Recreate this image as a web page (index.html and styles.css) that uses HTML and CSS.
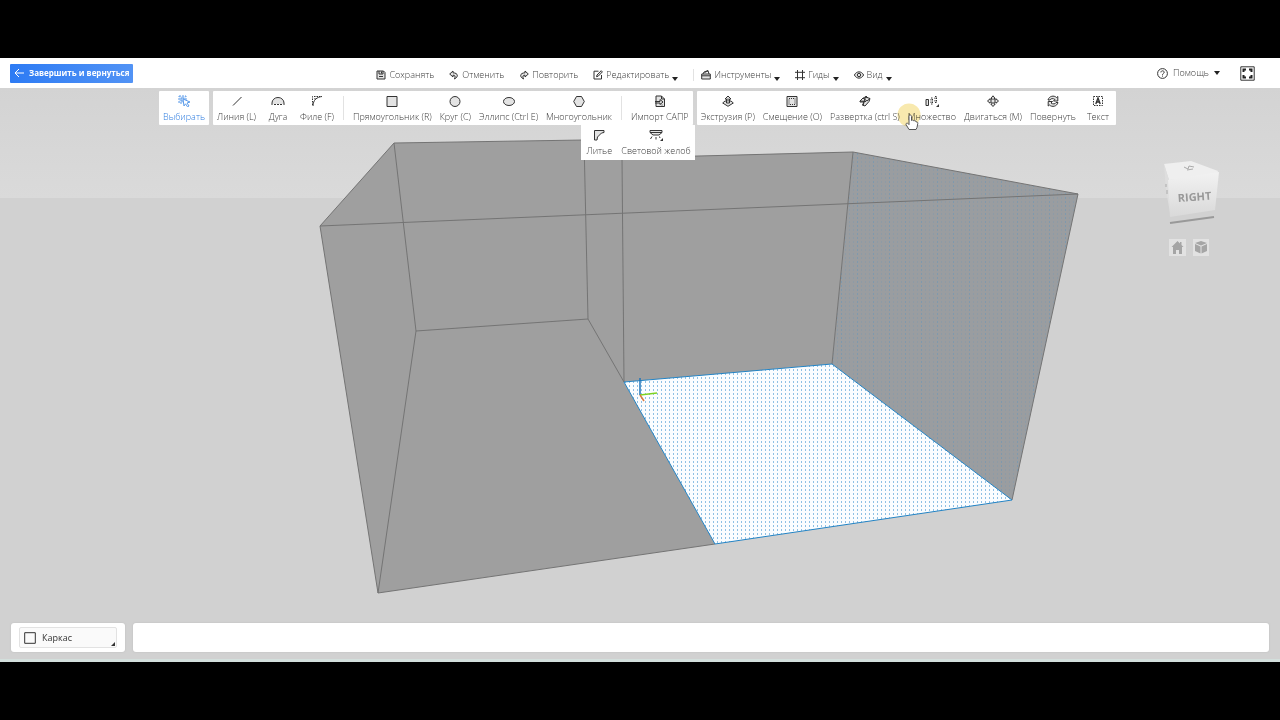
FILE: index.html
```html
<!DOCTYPE html>
<html lang="ru">
<head>
<meta charset="utf-8">
<meta name="viewport" content="width=device-width, initial-scale=1">
<title>Каркас</title>
<link rel="stylesheet" href="styles.css">
</head>
<body>
<div class="app">
  <header class="topbar">
    <div class="topbar-start">
      <button class="finish"><svg width="10" height="10" viewBox="0 0 10 10"><path d="M10 5H1M5 1L1 5l4 4"/></svg>Завершить и вернуться</button>
    </div>
    <nav class="menu">
      <button class="menu-item"><svg class="icon" width="10" height="10" viewBox="0 0 10 10"><path class="soft" d="M1 1h6.500L9 2.500V9H1z"/><path d="M3 1v3h4V1M3 6.500h4M5.500 1.500v2"/></svg>Сохранять</button>
      <button class="menu-item"><svg class="icon" width="10" height="10" viewBox="0 0 10 10"><path class="soft" d="M4 1L.7 4 4 7V5.200c2 0 2.700.8 1.500 3.800C9.500 7 9.500 3 4 2.800z"/></svg>Отменить</button>
      <button class="menu-item"><svg class="icon" width="10" height="10" viewBox="0 0 10 10"><path class="soft" d="M6 1l3.300 3L6 7V5.200C4 5.200 3.300 6 4.500 9 .5 7 .5 3 6 2.800z"/></svg>Повторить</button>
      <button class="menu-item"><svg class="icon" width="10" height="10" viewBox="0 0 10 10"><path d="M5.500 1.200H1V9h7.500V5"/><path class="soft" d="M3.500 6.700L4 5l4.200-4.300 1.200 1.200L5.200 6.200z"/></svg>Редактировать<i class="caret"></i></button>
      <span class="divider"></span>
      <button class="menu-item"><svg class="icon" width="10" height="10" viewBox="0 0 10 10"><path class="soft" d="M.7 4h8.600v5H.7z"/><path d="M2 4l1-2 4-1.500 1 3.500M3.500 2.500L7 1M.7 5.800h8.600"/></svg>Инструменты<i class="caret"></i></button>
      <button class="menu-item"><svg class="icon" width="10" height="10" viewBox="0 0 10 10"><path d="M2.500 0v10M7.500 0v10M0 2.300h10M0 7.700h10"/></svg>Гиды<i class="caret"></i></button>
      <button class="menu-item"><svg class="icon" width="10" height="10" viewBox="0 0 10 10"><path class="soft" d="M.4 5C2.500.8 7.500.8 9.600 5 7.500 9.200 2.500 9.200.4 5z"/><circle cx="5" cy="5" r="1.700"/></svg>Вид<i class="caret"></i></button>
    </nav>
    <div class="topbar-end">
      <button class="menu-item help"><svg class="icon" width="11" height="11" viewBox="0 0 11 11"><circle cx="5.500" cy="5.500" r="4.900"/><path d="M3.900 4.400c0-2.200 3.300-2 3.300-.1 0 1.200-1.700 1.100-1.700 2.500M5.500 7.600v1"/></svg>Помощь<i class="caret"></i></button>
      <button class="fullscreen" aria-label="Во весь экран"><svg width="15" height="15" viewBox="0 0 15 15"><path class="frame" d="M.8.800h13.400v13.400H.8z"/><path class="corners" d="M3.500 6V3.500H6M9 3.500h2.500V6M11.500 9v2.500H9M6 11.500H3.500V9"/></svg></button>
    </div>
  </header>

  <main class="workspace">
    <svg class="scene" viewBox="0 88 1280 574" preserveAspectRatio="xMidYMid slice">
      <defs>
        <linearGradient id="sky" x1="0" y1="0" x2="0" y2="1"><stop offset="0" stop-color="#d3d3d3"/><stop offset="1" stop-color="#dadada"/></linearGradient>
        <pattern id="dots" width="4" height="4" patternUnits="userSpaceOnUse"><rect width="4" height="4" fill="#fbfdff"/><rect x="1" y="1" width="1" height="2" fill="#8fc0e4"/></pattern>
        <pattern id="wall-dots" width="16" height="4" patternUnits="userSpaceOnUse"><rect width="16" height="4" fill="#9a9da0"/><path fill="#8e9ba6" d="M1 1h1v2H1zM5 1h1v2H5zM13 1h1v2h-1z"/><path fill="#7f99ad" d="M9 1h1v2H9z"/></pattern>
        <linearGradient id="cube" x1="0" y1="0" x2="0" y2="1"><stop offset="0" stop-color="#f2f2f2"/><stop offset="1" stop-color="#d9d9d9"/></linearGradient>
      </defs>
      <rect y="88" width="1280" height="574" fill="#d1d1d1"/>
      <rect y="88" width="1280" height="110" fill="url(#sky)"/>
      <path fill="#9f9f9f" d="M320 226L394 143 584 140 622 158 853 152 848 204 832 364 624 382 715 544 378 593z"/>
      <path fill="url(#wall-dots)" d="M853 152L1078 194 1012 500 832 364z"/>
      <path fill="url(#dots)" d="M624 382L832 364 1012 500 715 544z"/>
      <g class="edges">
        <path d="M378 593L320 226 394 143 584 140 588 319 416 331 394 143M416 331L378 593 715 544M588 319L624 382 622 158 853 152 1078 194 1012 500M320 226L1078 194M853 152L832 364"/>
      </g>
      <path class="selected" d="M624 382L832 364 1012 500 715 544z"/>
      <g stroke-width="1.500"><path d="M640 378V395" stroke="#1e73b8"/><path d="M640 395L657 393" stroke="#7ed321"/><path d="M640 395L644 401" stroke="#d9783d"/></g>
      <g class="view-cube">
        <path fill="#efefef" d="M1164 164l27-3 27 10-2 6-47 3z"/>
        <path fill="#dedede" d="M1164 164l5 16 1 33-4-23z"/>
        <path fill="url(#cube)" d="M1168 180l51-8-4 38-45 7z"/>
        <path d="M1170 223l44-6" stroke="#999" stroke-width="2"/>
        <path d="M1166 184v3M1167 190v4M1184 167l4 2 1-3 5 1M1187 170l6-1" stroke="#aaa"/>
        <text x="1178" y="202" transform="rotate(-4 1178 202)">RIGHT</text>
      </g>
      <g class="view-buttons">
        <path fill="#e2e2e2" d="M1169 239h17v17h-17zM1193 239h16v17h-16z"/>
        <path fill="#a5a5a5" d="M1177.500 241l-6 6h1.500v7h3v-4h3v4h3v-7h1.500l-2-2v-3h-1.500v1.500z"/>
        <path fill="#a5a5a5" d="M1201 241l6 2-6 2.500-6-2.500zM1195 244l5.500 2.500v7L1195 251zM1207 244l-5.500 2.500v7L1207 251z"/>
      </g>
    </svg>

    <div class="toolbar">
      <div class="group">
        <button class="tool active"><svg class="icon" width="14" height="12" viewBox="0 0 14 12"><path class="soft" d="M2 1h7v7H2z" stroke-dasharray="2 1"/><path d="M4 3h3v3H4z"/><path fill="#fff" d="M6 4l7 3-3 1 2 3-1.500.8-2-3L7 11z"/></svg>Выбирать</button>
      </div>
      <div class="group">
        <button class="tool"><svg class="icon" width="12" height="12" viewBox="0 0 12 12"><path d="M2 10.500L10.500 2"/></svg>Линия (L)</button>
        <button class="tool"><svg class="icon" width="14" height="12" viewBox="0 0 14 12"><path class="soft" stroke="none" d="M1 9a6 6 0 0 1 12 0z"/><path d="M1 10V8a6 5.500 0 0 1 12 0v2"/><path d="M3 9.500h8" stroke-dasharray="2 1"/></svg>Дуга</button>
        <button class="tool"><svg class="icon" width="12" height="12" viewBox="0 0 12 12"><path d="M2 11C2 5 6 2 11 1.500"/><path d="M1.500 10V1.500H9M4 3v2" stroke-dasharray="1.500 1"/></svg>Филе (F)</button>
        <span class="divider"></span>
        <button class="tool"><svg class="icon" width="12" height="12" viewBox="0 0 12 12"><path class="soft" d="M1 1.500h10v10H1z"/></svg>Прямоугольник (R)</button>
        <button class="tool"><svg class="icon" width="12" height="12" viewBox="0 0 12 12"><circle class="soft" cx="6" cy="6.500" r="5"/></svg>Круг (C)</button>
        <button class="tool"><svg class="icon" width="12" height="12" viewBox="0 0 12 12"><ellipse class="soft" cx="6" cy="6.500" rx="5.500" ry="4"/></svg>Эллипс (Ctrl E)</button>
        <button class="tool"><svg class="icon" width="12" height="12" viewBox="0 0 12 12"><path class="soft" d="M3.500 1.500h5l2.800 5-2.800 5h-5L.7 6.500z"/></svg>Многоугольник</button>
        <span class="divider"></span>
        <button class="tool"><svg class="icon" width="12" height="12" viewBox="0 0 12 12"><path class="soft" d="M2 1h5.500L10.500 4v7.500H2z"/><path d="M7.500 1v3h3M1 6.500h5V4.500L9 7 6 9.500V8H1M8 9.500v1"/></svg>Импорт САПР</button>
        <div class="submenu">
          <button class="tool"><svg class="icon" width="12" height="12" viewBox="0 0 12 12"><path class="soft" d="M1.500 1.500h9.500v2L8.500 4 4.500 8l-.5 3H1.500z"/></svg>Литье</button>
          <button class="tool"><svg class="icon" width="14" height="12" viewBox="0 0 14 12"><path class="soft" d="M1 1.500h12v2L10 6H4L1 3.500z"/><path d="M1 3.500h12M3 7.500L1.500 10M7 8v2.500M10.500 7.500l.5 1.500"/><path class="corner" d="M14 9v3h-3z"/></svg>Световой желоб</button>
        </div>
      </div>
      <div class="group">
        <button class="tool"><svg class="icon" width="12" height="12" viewBox="0 0 12 12"><path class="soft" d="M.7 8L3 6h6l2.300 2L6 11.300z"/><path class="soft" d="M4.500 8V4H3l3-3 3 3H7.500v4z"/><path d="M6 3.500v3"/></svg>Экструзия (P)</button>
        <button class="tool"><svg class="icon" width="12" height="12" viewBox="0 0 12 12"><path class="soft" d="M1 1.500h10v10H1z"/><path d="M3 3.500h6v6H3z" stroke-dasharray="1 1"/></svg>Смещение (O)</button>
        <button class="tool"><svg class="icon" width="12" height="12" viewBox="0 0 12 12"><path class="soft" d="M1 6l3-3 4-.5 3 1-1 3-4 4.500-2.500-1L5 7H1z"/><path d="M6.500 1L4 11M4 3l4 3 3-2.500M1 6l6 .5M7 1l2 2"/></svg>Развертка (ctrl S)</button>
        <button class="tool"><svg class="icon" width="14" height="12" viewBox="0 0 14 12"><path class="soft" d="M1 4.500h2.500v6H1z"/><path d="M6 3h1.500v6H6zM10 1.500h1.500v6H10z" stroke-dasharray="1.500 1"/><path class="corner" d="M14 9v3h-3z"/></svg>Множество</button>
        <button class="tool"><svg class="icon" width="12" height="12" viewBox="0 0 12 12"><path class="soft" d="M6 .8l2.200 2.700H7V5h2V3.800L11.500 6 9 8.200V7H7v2h1.200L6 11.500 3.800 9H5V7H3v1.200L.5 6 3 3.800V5h2V3.500H3.800z"/></svg>Двигаться (M)</button>
        <button class="tool"><svg class="icon" width="12" height="12" viewBox="0 0 12 12"><path class="soft" d="M1 5C2 1 7 0 9.500 2.500l1.300-1V6H6.500L8 4.500C6 3 3.500 3.500 3 5zM11 7.500c-1 4-6 5-8.500 2.500l-1.300 1V6.500h4.300L4 8c2 1.500 4.500 1 5-.5z"/></svg>Повернуть</button>
        <button class="tool"><svg class="icon" width="12" height="12" viewBox="0 0 12 12"><path d="M1.500 1.500h9v9h-9z" stroke-dasharray="1.500 1"/><path d="M3.800 9L6 3l2.200 6M4.500 7h3" stroke-width="1.400"/></svg>Текст</button>
      </div>
    </div>

    <svg class="halo" width="24" height="24" viewBox="0 0 24 24"><circle cx="12" cy="12" r="11.500" fill="#f8e9ae"/></svg>
    <svg class="pointer" width="14" height="17" viewBox="0 0 14 17"><path fill="#fff" stroke="#555" d="M4 15.500l-3-5c0-2 2-1.500 3 0V2.500c0-2 2.500-2 2.500 0v4c1-1 2.300-.5 2.300.5 1-.8 2.200-.2 2.200 1 1.200-.4 2 .4 1.800 1.500l-.8 4-1 2z"/></svg>

    <footer class="bottom">
      <div class="mode-card">
        <button class="mode"><svg width="12" height="12" viewBox="0 0 12 12"><path d="M.7.700h10.600v10.600H.7z"/></svg>Каркас</button>
      </div>
      <div class="status"></div>
    </footer>
  </main>
</div>
</body>
</html>
```
FILE: styles.css
```css
* { box-sizing: border-box; }
body {
  margin: 0;
  background: #000;
  color: #3c3c3c;
  font: 300 9px/12px "Open Sans", "Noto Sans", sans-serif;
}
button {
  margin: 0;
  padding: 0;
  border: 0;
  background: none;
  color: inherit;
  font: inherit;
  white-space: nowrap;
}
svg { flex: none; fill: none; }
.app {
  display: flex;
  flex-direction: column;
  min-height: 100vh;
  padding: 58px 0;
}
.topbar {
  display: grid;
  grid-template-columns: 1fr auto 1fr;
  align-items: center;
  height: 30px;
  padding: 0 25px 0 10px;
  background: #fff;
}
.finish {
  display: flex;
  align-items: center;
  gap: 5px;
  height: 19px;
  padding: 0 4px;
  border-radius: 1px;
  background: linear-gradient(90deg, #2d7bf4, #5293f5);
  color: #fff;
  font-size: 8px;
  font-weight: 700;
}
.finish svg { stroke: #fff; }
.menu {
  display: flex;
  align-items: center;
  gap: 15px;
  padding: 4px 0 0 3px;
}
.menu-item {
  display: flex;
  align-items: center;
  gap: 3px;
}
.icon { stroke: #333; stroke-width: 1; }
.icon .soft { fill: #e3e3e3; }
.icon .corner { fill: #333; stroke: none; }
.caret {
  align-self: flex-end;
  border: 3px solid transparent;
  border-top: 4px solid #222;
  border-bottom: 0;
}
.divider {
  width: 1px;
  align-self: stretch;
  background: #e2e2e2;
}
.menu .divider { margin-right: -8px; }
.topbar-end {
  display: flex;
  justify-content: flex-end;
  align-items: center;
  gap: 20px;
}
.help { gap: 5px; }
.help .caret { align-self: center; }
.fullscreen { display: flex; }
.fullscreen .frame { stroke: #333; }
.fullscreen .corners { stroke: #222; stroke-width: 2; fill: #ddd; }
.workspace {
  position: relative;
  display: flex;
  flex: 1;
  flex-direction: column;
  justify-content: space-between;
  overflow: hidden;
  border-bottom: 3px solid #d3dfdc;
}
.scene {
  position: absolute;
  top: 0;
  left: 0;
  width: 100%;
  height: calc(100% + 3px);
}
.edges { stroke: #747474; }
.selected { stroke: #2383c4; }
.view-cube text {
  fill: #999;
  font: 700 11px "Open Sans", sans-serif;
}
.toolbar {
  position: relative;
  display: flex;
  justify-content: center;
  gap: 4px;
  padding: 3px 5px 0 0;
}
.group {
  position: relative;
  display: flex;
  height: 34px;
  border-radius: 1px;
  background: #fff;
}
.group > .divider { margin: 5px; }
.tool {
  display: flex;
  flex-direction: column;
  align-items: center;
  gap: 4px;
  min-width: 36px;
  padding: 4px 4px 0;
}
.active { color: #2f7de0; }
.active .icon { stroke: #5b9bea; }
.active .soft { fill: #dbe9fb; }
.submenu {
  position: absolute;
  top: 100%;
  right: -2px;
  display: flex;
  height: 35px;
  background: #fff;
}
.halo {
  position: absolute;
  top: 15px;
  left: 897px;
  mix-blend-mode: multiply;
}
.pointer {
  position: absolute;
  top: 26px;
  left: 905px;
}
.bottom {
  position: relative;
  display: flex;
  gap: 8px;
  padding: 0 11px 7px;
}
.mode-card, .status {
  height: 29px;
  border-radius: 3px;
  background: #fff;
  box-shadow: 0 0 2px #bbb;
}
.mode-card { padding: 4px 8px; }
.status { flex: 1; }
.mode {
  position: relative;
  display: flex;
  align-items: center;
  gap: 6px;
  width: 98px;
  height: 21px;
  padding: 0 4px;
  border: 1px solid #e2e2e2;
  border-radius: 2px;
  background: #fafafa;
  color: #333;
  font-weight: 400;
}
.mode svg { stroke: #333; }
.mode::after {
  content: "";
  position: absolute;
  right: 1px;
  bottom: 1px;
  border: 2px solid #333;
  border-top-color: transparent;
  border-left-color: transparent;
}
```
